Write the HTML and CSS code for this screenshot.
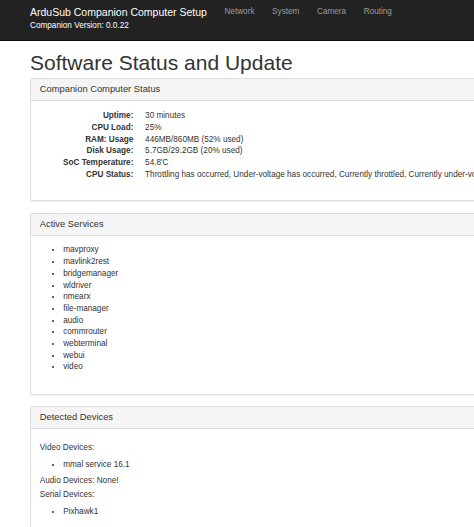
FILE: index.html
```html
<!DOCTYPE html>
<html>
<head>
<meta charset="utf-8">
<title>Software Status and Update</title>
<link rel="stylesheet" href="styles.css">
</head>
<body>
<nav class="navbar">
  <div class="brand">
    <div class="brand-name">ArduSub Companion Computer Setup</div>
    <div class="brand-version">Companion Version: 0.0.22</div>
  </div>
  <ul class="nav">
    <li><a href="#">Network</a></li>
    <li><a href="#">System</a></li>
    <li><a href="#">Camera</a></li>
    <li><a href="#">Routing</a></li>
  </ul>
</nav>
<main class="container">
  <h1 class="page-title">Software Status and Update</h1>

  <section class="panel">
    <div class="panel-heading">Companion Computer Status</div>
    <div class="panel-body status-body">
      <dl class="dl-horizontal">
        <dt>Uptime:</dt><dd>30 minutes</dd>
        <dt>CPU Load:</dt><dd>25%</dd>
        <dt>RAM: Usage</dt><dd>446MB/860MB (52% used)</dd>
        <dt>Disk Usage:</dt><dd>5.7GB/29.2GB (20% used)</dd>
        <dt>SoC Temperature:</dt><dd>54.8'C</dd>
        <dt>CPU Status:</dt><dd>Throttling has occurred, Under-voltage has occurred, Currently throttled, Currently under-voltage</dd>
      </dl>
    </div>
  </section>

  <section class="panel">
    <div class="panel-heading">Active Services</div>
    <div class="panel-body services-body">
      <ul class="list">
        <li>mavproxy</li>
        <li>mavlink2rest</li>
        <li>bridgemanager</li>
        <li>wldriver</li>
        <li>nmearx</li>
        <li>file-manager</li>
        <li>audio</li>
        <li>commrouter</li>
        <li>webterminal</li>
        <li>webui</li>
        <li>video</li>
      </ul>
    </div>
  </section>

  <section class="panel">
    <div class="panel-heading">Detected Devices</div>
    <div class="panel-body devices-body">
      <div class="dev-label first">Video Devices:</div>
      <ul class="list dev-list">
        <li>mmal service 16.1</li>
      </ul>
      <div class="dev-label audio">Audio Devices: None!</div>
      <div class="dev-label">Serial Devices:</div>
      <ul class="list dev-list">
        <li>Pixhawk1</li>
      </ul>
    </div>
  </section>
</main>
</body>
</html>
```

FILE: styles.css
```css
html {
  overflow: hidden;
}
body {
  margin: 0;
  font-family: "Liberation Sans", Arial, Helvetica, sans-serif;
  font-size: 8.2px;
  line-height: 11.7px;
  color: #333333;
  background: #ffffff;
}
.navbar {
  display: flex;
  align-items: flex-start;
  height: 40px;
  padding-left: 30px;
  background: #222222;
  border-bottom: 1px solid #080808;
}
.brand {
  padding-top: 6px;
  margin-right: 8.8px;
  color: #ffffff;
  white-space: nowrap;
}
.brand-name {
  font-size: 10.5px;
  line-height: 12px;
}
.brand-version {
  margin-top: 3px;
  font-size: 8.2px;
  line-height: 10px;
}
.nav {
  display: flex;
  list-style: none;
  margin: 0;
  padding: 6px 0 0 0;
}
.nav a {
  display: block;
  padding: 0 8.8px;
  line-height: 12px;
  color: #9d9d9d;
  text-decoration: none;
  white-space: nowrap;
}
.container {
  padding-left: 30px;
  width: 620px;
}
.page-title {
  margin: 10.2px 0 3.7px 0;
  font-size: 21px;
  line-height: 23.1px;
  font-weight: 500;
  color: #333333;
  white-space: nowrap;
}
.panel {
  margin-bottom: 11.7px;
  border: 1px solid #dddddd;
  border-radius: 2px;
  box-shadow: 0 1px 1px rgba(0, 0, 0, 0.05);
  background: #ffffff;
}
.panel-heading {
  padding: 5px 8.8px 5.5px 8.8px;
  font-size: 9.36px;
  line-height: 10.5px;
  color: #333333;
  background: #f5f5f5;
  border-bottom: 1px solid #dddddd;
}
.panel-body {
  padding: 8.8px;
}
.status-body {
  padding-top: 9.2px;
  padding-bottom: 19.6px;
}
.services-body {
  padding-bottom: 20.5px;
}
.devices-body {
  padding-top: 12.5px;
}
.dl-horizontal {
  display: grid;
  grid-template-columns: 93.6px auto;
  column-gap: 11.7px;
  margin: 0;
}
.dl-horizontal dt {
  font-weight: bold;
  text-align: right;
  white-space: nowrap;
}
.dl-horizontal dd {
  margin: 0;
  white-space: nowrap;
}
.list {
  margin: 0;
  padding-left: 23.4px;
}
.list li {
  white-space: nowrap;
}
.dev-label {
  margin-bottom: 5.3px;
}
.dev-label.audio {
  margin-bottom: 2.5px;
}
.dev-list {
  margin-bottom: 4.5px;
}
```
